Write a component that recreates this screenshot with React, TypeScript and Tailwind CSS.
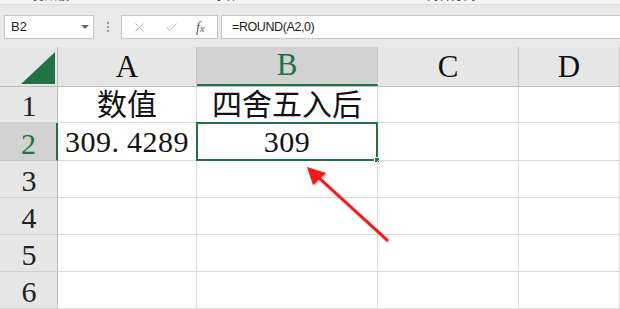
import { X, Check } from "lucide-react"

const serif = { fontFamily: "'Liberation Serif', 'Noto Sans CJK SC', serif" }
const sans = { fontFamily: "'Liberation Sans', 'Noto Sans CJK SC', sans-serif" }

const cols = [
  { key: "A", w: "w-[139px]" },
  { key: "B", w: "w-[181px]" },
  { key: "C", w: "w-[141px]" },
  { key: "D", w: "flex-1" },
]

function Corner() {
  return (
    <div className="w-[58px] h-full border-r border-[#bdbdbd] relative shrink-0">
      <svg width="58" height="40" className="block">
        <polygon points="21,37 55,5 55,37" fill="#217346" />
      </svg>
    </div>
  )
}

function RowHeader({ n, active }: { n: number; active?: boolean }) {
  return (
    <div
      className={
        "w-[58px] shrink-0 h-full flex items-end justify-center border-b text-[30px] leading-[30px] " +
        (active
          ? "bg-[#d2d2d2] border-r-2 border-r-[#217346] border-b-[#c6c6c6] text-[#217346]"
          : "bg-[#e6e6e6] border-r border-r-[#bdbdbd] border-b-[#d0d0d0] text-[#222]")
      }
      style={serif}
    >
      <span className="pb-[1px] pl-[1px]">{n}</span>
    </div>
  )
}

function Cell({ w, children, selected, pb = "pb-0" }: { w: string; children?: React.ReactNode; selected?: boolean; pb?: string }) {
  return (
    <div className={`${w} h-full relative border-r border-b border-[#dadada] flex items-end justify-center text-[30px] leading-[30px] text-[#111] ${pb}`} style={serif}>
      {children}
      {selected && (
        <div className="absolute -left-px -top-px -right-px -bottom-px border-2 border-[#217346] pointer-events-none">
          <div className="absolute -right-[4px] -bottom-[4px] w-[6px] h-[6px] bg-[#217346] border border-white" />
        </div>
      )}
    </div>
  )
}

export default function App() {
  return (
    <div className="w-[620px] h-[309px] overflow-hidden relative bg-white select-none" style={sans}>
      {/* ribbon bottom, group labels mostly scrolled out of view */}
      <div className="h-[5px] bg-[#f3f3f3] border-b border-[#dcdcdc] overflow-hidden flex text-[12px] leading-[14px] text-[#444]">
        <span className="ml-[33px] -mt-[11px]">剪贴板</span>
        <span className="ml-[30px] -mt-[11px]">ㄱ</span>
        <span className="ml-[104px] -mt-[11px]">字体</span>
        <span className="ml-[102px] -mt-[11px]">ㄱ</span>
        <span className="ml-[76px] -mt-[11px]">对齐方式</span>
        <span className="ml-[86px] -mt-[11px]">ㄱ</span>
      </div>

      {/* formula bar */}
      <div className="h-[42px] bg-[#e9e9e9] flex items-start pt-[10px] pl-[4px]">
        <div className="w-[90px] h-[24px] bg-white border border-[#c6c6c6] flex items-center justify-between pl-[6px] pr-[4px] text-[13px] text-[#222]">
          <span>B2</span>
          <svg width="8" height="5" viewBox="0 0 8 5"><polygon points="0,0 8,0 4,4" fill="#666" /></svg>
        </div>
        <div className="w-[27px] h-[24px] flex flex-col items-center justify-center gap-[2px]">
          <span className="w-[2px] h-[2px] bg-[#9a9a9a]" />
          <span className="w-[2px] h-[2px] bg-[#9a9a9a]" />
          <span className="w-[2px] h-[2px] bg-[#9a9a9a]" />
        </div>
        <div className="w-[97px] h-[24px] bg-white border border-[#c6c6c6] flex items-center pl-[10px] gap-[17px]">
          <X size={15} strokeWidth={1.5} color="#b4b4b4" />
          <Check size={15} strokeWidth={1.5} color="#b4b4b4" />
          <span className="text-[14px] italic text-[#555]" style={serif}>
            f<span className="text-[10px]">x</span>
          </span>
        </div>
        <div className="ml-[3px] flex-1 h-[24px] bg-white border border-[#c6c6c6] border-r-0 flex items-center pl-[10px] text-[12.5px] tracking-[-0.4px] text-[#222]">
          =ROUND(A2,0)
        </div>
      </div>

      {/* column headers */}
      <div className="h-[40px] flex bg-[#e6e6e6] border-b border-[#bdbdbd]">
        <Corner />
        {cols.map((c) => (
          <div
            key={c.key}
            className={
              `${c.w} h-full flex items-end justify-center pb-[4px] text-[31px] leading-[31px] border-r border-r-[#c6c6c6] ` +
              (c.key === "B" ? "bg-[#d2d2d2] border-b-2 border-b-[#217346] text-[#217346]" : "text-[#111]")
            }
            style={serif}
          >
            {c.key}
          </div>
        ))}
      </div>

      {/* rows */}
      <div className="flex h-[36px]">
        <RowHeader n={1} />
        <Cell w="w-[139px]" pb="pb-[2px]">数值</Cell>
        <Cell w="w-[181px]" pb="pb-[2px]">四舍五入后</Cell>
        <Cell w="w-[141px]" />
        <Cell w="flex-1" />
      </div>
      <div className="flex h-[38px]">
        <RowHeader n={2} active />
        <Cell w="w-[139px]">
          <span className="tracking-[0.5px] pb-[3px]">
            309<span className="inline-block w-[15.5px]">.</span>4289
          </span>
        </Cell>
        <Cell w="w-[181px]" selected>
          <span className="tracking-[0.5px] pb-[3px]">309</span>
        </Cell>
        <Cell w="w-[141px]" />
        <Cell w="flex-1" />
      </div>
      {[3, 4, 5, 6].map((n) => (
        <div key={n} className="flex h-[37px]">
          <RowHeader n={n} />
          <Cell w="w-[139px]" />
          <Cell w="w-[181px]" />
          <Cell w="w-[141px]" />
          <Cell w="flex-1" />
        </div>
      ))}

      {/* annotation arrow */}
      <svg className="absolute left-0 top-0 pointer-events-none" width="620" height="309">
        <defs>
          <filter id="sh" x="-20%" y="-20%" width="140%" height="140%">
            <feDropShadow dx="1" dy="1" stdDeviation="1" floodColor="#000" floodOpacity="0.35" />
          </filter>
        </defs>
        <g filter="url(#sh)">
          <line x1="387" y1="240" x2="318" y2="177" stroke="#ec1c1c" strokeWidth="3" strokeLinecap="round" />
          <polygon points="307,167 326,173 313,185" fill="#ec1c1c" />
        </g>
      </svg>
    </div>
  )
}
